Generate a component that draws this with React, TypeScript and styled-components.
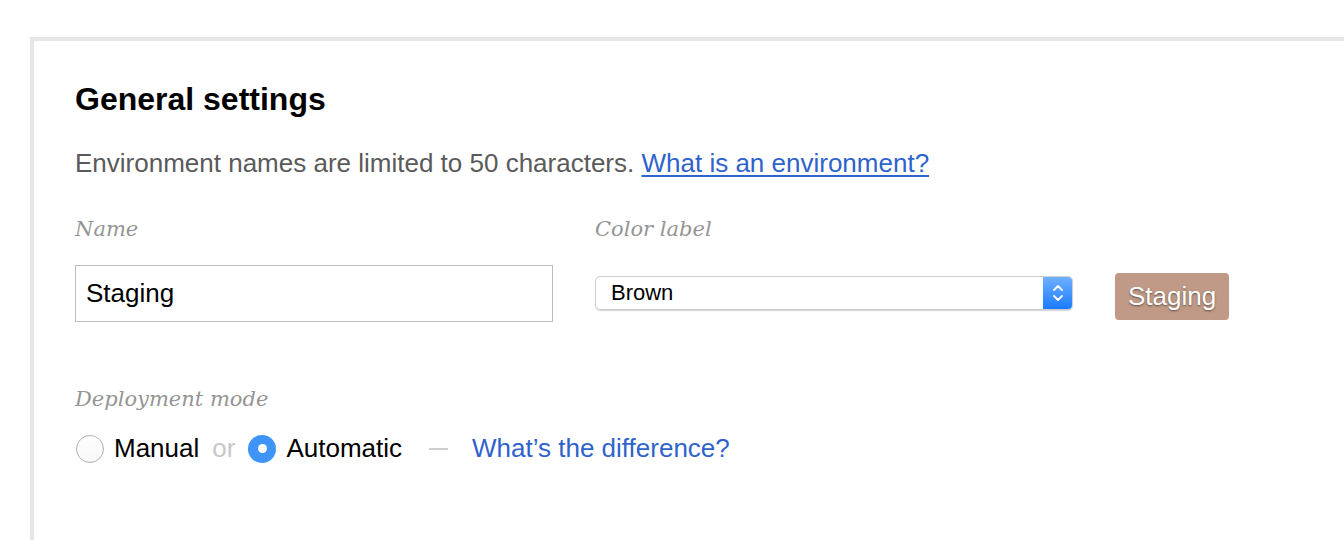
import React from 'react';
import styled, { createGlobalStyle } from 'styled-components';

const GlobalStyle = createGlobalStyle`
  html, body {
    margin: 0;
    padding: 0;
    background: #fff;
    overflow: hidden;
  }
  body {
    font-family: "Liberation Sans", Arial, sans-serif;
  }
`;

const Panel = styled.section`
  margin: 37px 0 0 30px;
  border-top: 4px solid #e6e6e6;
  border-left: 4px solid #e6e6e6;
  min-height: 520px;
  padding: 39px 0 0 41px;
  box-sizing: border-box;
`;

const Title = styled.h2`
  margin: 0;
  font-size: 32px;
  line-height: 38px;
  font-weight: bold;
  color: #000;
`;

const Intro = styled.p`
  margin: 30px 0 0;
  font-size: 26px;
  line-height: 30px;
  color: #5a5a5a;
`;

const Link = styled.a<{ $underline?: boolean }>`
  color: #2f63cc;
  text-decoration: ${(p) => (p.$underline ? 'underline' : 'none')};
  text-underline-offset: 3px;
  cursor: pointer;
`;

const FieldGrid = styled.div`
  display: grid;
  grid-template-columns: 478px 478px auto;
  column-gap: 42px;
  row-gap: 23px;
  margin-top: 38px;
  align-items: center;
`;

const Label = styled.div`
  font-family: "DejaVu Serif", Georgia, serif;
  font-style: italic;
  font-size: 21px;
  line-height: 26px;
  color: #959595;
`;

const TextInput = styled.div`
  height: 57px;
  box-sizing: border-box;
  border: 1px solid #bdbdbd;
  padding: 0 10px;
  display: flex;
  align-items: center;
  font-size: 26px;
  color: #000;
`;

const Select = styled.div`
  height: 34px;
  box-sizing: border-box;
  border: 1px solid #cfcfcf;
  border-radius: 5px;
  box-shadow: 0 1px 1px rgba(0, 0, 0, 0.18);
  display: flex;
  align-items: center;
  overflow: hidden;
  margin-top: -1px;
`;

const SelectText = styled.span`
  flex: 1;
  padding-left: 15px;
  font-size: 22px;
  color: #000;
`;

const Stepper = styled.span`
  width: 29px;
  height: 100%;
  display: flex;
  align-items: center;
  justify-content: center;
  background: linear-gradient(#6fb0ff, #1a7bff);
`;

const Badge = styled.span`
  justify-self: start;
  width: 114px;
  height: 47px;
  margin-top: 6px;
  box-sizing: border-box;
  display: flex;
  align-items: center;
  justify-content: center;
  border-radius: 4px;
  background: #c09a87;
  color: #fff;
  font-size: 26px;
  text-shadow: 0 1px 2px rgba(0, 0, 0, 0.5);
`;

const ModeSection = styled.div`
  margin-top: 64px;
`;

const RadioRow = styled.div`
  display: flex;
  align-items: center;
  margin-top: 21px;
  font-size: 26px;
  color: #000;
`;

const Radio = styled.span<{ $checked?: boolean }>`
  width: 28px;
  height: 28px;
  box-sizing: border-box;
  border-radius: 50%;
  margin-left: 1px;
  margin-right: 10px;
  display: inline-flex;
  align-items: center;
  justify-content: center;
  border: ${(p) => (p.$checked ? 'none' : '1px solid #b0b0b0')};
  background: ${(p) => (p.$checked ? '#3f95f7' : 'linear-gradient(#fff, #f7f7f7)')};

  &::after {
    content: '';
    display: ${(p) => (p.$checked ? 'block' : 'none')};
    width: 9px;
    height: 9px;
    border-radius: 50%;
    background: #fff;
  }
`;

const Or = styled.span`
  color: #c8c8c8;
  margin: 0 12px 0 13px;
`;

const Dash = styled.span`
  display: inline-block;
  width: 19px;
  height: 2px;
  background: #cfcfcf;
  margin: 0 24px 0 27px;
`;

const Chevrons = () => (
  <svg width="14" height="22" viewBox="0 0 14 22" fill="none">
    <path d="M3 8 L7 4 L11 8" stroke="#fff" strokeWidth="1.8" strokeLinecap="round" strokeLinejoin="round" />
    <path d="M3 14 L7 18 L11 14" stroke="#fff" strokeWidth="1.8" strokeLinecap="round" strokeLinejoin="round" />
  </svg>
);

const App = () => {
  return (
    <>
      <GlobalStyle />
      <Panel>
        <Title>General settings</Title>
        <Intro>
          Environment names are limited to 50 characters.{' '}
          <Link $underline>What is an environment?</Link>
        </Intro>
        <FieldGrid>
          <Label>Name</Label>
          <Label>Color label</Label>
          <span />
          <TextInput>Staging</TextInput>
          <Select>
            <SelectText>Brown</SelectText>
            <Stepper>
              <Chevrons />
            </Stepper>
          </Select>
          <Badge>Staging</Badge>
        </FieldGrid>
        <ModeSection>
          <Label>Deployment mode</Label>
          <RadioRow>
            <Radio />
            Manual
            <Or>or</Or>
            <Radio $checked />
            Automatic
            <Dash />
            <Link>What’s the difference?</Link>
          </RadioRow>
        </ModeSection>
      </Panel>
    </>
  );
};

export default App;
